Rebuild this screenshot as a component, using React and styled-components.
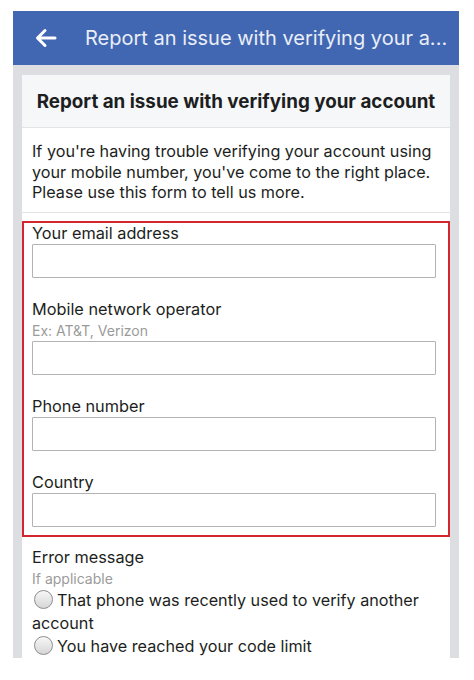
import React from 'react';
import styled, { createGlobalStyle } from 'styled-components';

const GlobalStyle = createGlobalStyle`
  body {
    margin: 0;
    background: #ffffff;
    font-family: Inter, "Liberation Sans", Arial, sans-serif;
    color: #1c1e21;
  }
`;

// 스크린샷 전체 프레임
const Screen = styled.div`
  margin: 11px 13px 0;
  width: 446px;
  height: 647px;
  overflow: hidden;
  background: #dcdee2;
`;

const TopBar = styled.div`
  height: 54px;
  background: #4267b2;
  display: flex;
  align-items: center;
  padding: 0 10px 0 22px;
  gap: 28px;
`;

const BackArrow = styled.svg`
  flex-shrink: 0;
  width: 22px;
  height: 20px;
`;

const BarTitle = styled.div`
  color: #e9eef8;
  font-size: 20px;
  white-space: nowrap;
`;

const Content = styled.div`
  padding: 10px 9px 0;
`;

const Card = styled.div`
  background: #ffffff;
  min-height: 600px;
`;

const CardHeader = styled.div`
  height: 52px;
  background: #f6f7f8;
  border-bottom: 1px solid #e3e4e6;
  display: flex;
  align-items: center;
  justify-content: center;
  font-size: 18.8px;
  font-weight: 700;
`;

const Intro = styled.p`
  margin: 0;
  padding: 13px 10px 9px;
  font-size: 16.2px;
  line-height: 20.5px;
  border-bottom: 1px solid #e3e4e6;
`;

const RedBox = styled.div`
  margin-top: 8px;
  border: 2px solid #d3262e;
  padding: 0 12px 8px 8px;
  display: flex;
  flex-direction: column;
  gap: 21px;
`;

const Field = styled.div`
  display: flex;
  flex-direction: column;
`;

const Label = styled.div`
  font-size: 16.3px;
  line-height: 21px;
`;

const Hint = styled.div`
  font-size: 14px;
  line-height: 21px;
  color: #9b9b9b;
`;

const TextInput = styled.input`
  box-sizing: border-box;
  height: 34px;
  width: 100%;
  border: 1.5px solid #b3b3b3;
  border-radius: 1px;
  background: #ffffff;
  font: inherit;
`;

const ErrorSection = styled.div`
  padding: 10px 10px 0;
`;

const Options = styled.div`
  font-size: 16.2px;
  line-height: 23px;
`;

const Radio = styled.span`
  display: inline-block;
  width: 17px;
  height: 17px;
  border-radius: 50%;
  border: 1px solid #8d8d8d;
  background: linear-gradient(#f7f7f7, #d6d6d6);
  vertical-align: -3px;
  margin: 0 4px 0 2px;
`;

const fields = [
  { label: 'Your email address' },
  { label: 'Mobile network operator', hint: 'Ex: AT&T, Verizon' },
  { label: 'Phone number' },
  { label: 'Country' },
];

const App = () => {
  return (
    <>
      <GlobalStyle />
      <Screen>
        <TopBar>
          <BackArrow viewBox="0 0 22 20">
            <path
              d="M20 10H3M10 2.5L2.5 10L10 17.5"
              fill="none"
              stroke="#ffffff"
              strokeWidth="3"
              strokeLinecap="round"
              strokeLinejoin="round"
            />
          </BackArrow>
          <BarTitle>Report an issue with verifying your a...</BarTitle>
        </TopBar>
        <Content>
          <Card>
            <CardHeader>Report an issue with verifying your account</CardHeader>
            <Intro>
              If you're having trouble verifying your account using your mobile number, you've come
              to the right place. Please use this form to tell us more.
            </Intro>
            <RedBox>
              {fields.map((f) => (
                <Field key={f.label}>
                  <Label>{f.label}</Label>
                  {f.hint && <Hint>{f.hint}</Hint>}
                  <TextInput type="text" />
                </Field>
              ))}
            </RedBox>
            <ErrorSection>
              <Label>Error message</Label>
              <Hint>If applicable</Hint>
              <Options>
                <div>
                  <Radio />
                  That phone was recently used to verify another account
                </div>
                <div>
                  <Radio />
                  You have reached your code limit
                </div>
              </Options>
            </ErrorSection>
          </Card>
        </Content>
      </Screen>
    </>
  );
};

export default App;
